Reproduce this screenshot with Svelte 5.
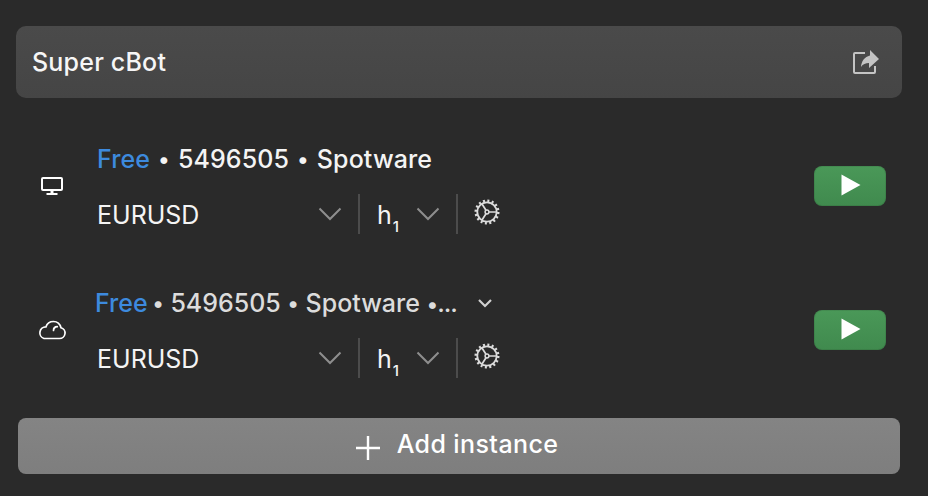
<script>
	const instances = [
		{ kind: "desktop", account: "Free", number: "5496505", broker: "Spotware", more: false },
		{ kind: "cloud", account: "Free", number: "5496505", broker: "Spotware", more: true }
	];
</script>

<div class="panel">
	<div class="header">
		<span class="name">Super cBot</span>
		<svg class="share" width="27" height="26" viewBox="0 0 27 26" fill="none">
			<path d="M13 4H3a1 1 0 0 0-1 1v18a1 1 0 0 0 1 1h19a1 1 0 0 0 1-1v-6" stroke="#c4c4c4" stroke-width="2" />
			<path d="M18 1l9 9-10 9v-5c-3.500 0-6 1-8 4 0.500-6 3.500-10 9-11.500z" fill="#c4c4c4" />
		</svg>
	</div>

	{#each instances as item}
		<div class="row">
			<div class="kind">
				{#if item.kind === "desktop"}
					<svg width="24" height="20" viewBox="0 0 24 20" fill="none" stroke="#fff">
						<rect x="2" y="2" width="20" height="12" rx="1" stroke-width="2" />
						<path d="M12 14v3" stroke-width="3" />
						<path d="M6.500 18h11" stroke-width="2" />
					</svg>
				{:else}
					<svg width="30" height="20" viewBox="0 0 30 20" fill="none" stroke="#fff" stroke-width="1.700">
						<path d="M7 18.500h15.500a5.500 5.500 0 0 0 1.500-10.800C23 3.800 20 1.500 16.500 1.500c-3.600 0-6.500 2-7.500 5.300A6 6 0 0 0 7 18.500z" />
						<path d="M16.500 10.500c0-2.200 1.600-3.800 3.800-3.800" stroke-linecap="round" />
					</svg>
				{/if}
			</div>

			<div class="body">
				<div class="title" class:more={item.more}>
					<span class="free">{item.account}</span>
					<span class="dot">•</span>
					<span>{item.number}</span>
					<span class="dot">•</span>
					<span>{item.broker}</span>
					{#if item.more}
						<span class="cut"><span class="dot">•</span>...</span>
						<svg class="caret" width="16" height="10" viewBox="0 0 16 10" fill="none">
							<path d="M2 2l6 6 6-6" stroke="#d0d0d0" stroke-width="2.200" />
						</svg>
					{/if}
				</div>
				<div class="controls">
					<div class="select symbol">
						<span>EURUSD</span>
						<svg width="24" height="14" viewBox="0 0 24 14" fill="none"><path d="M1.500 1.500 12 12 22.500 1.500" stroke="#8e8e8e" stroke-width="2" /></svg>
					</div>
					<div class="select frame">
						<span>h<sub>1</sub></span>
						<svg width="24" height="14" viewBox="0 0 24 14" fill="none"><path d="M1.500 1.500 12 12 22.500 1.500" stroke="#8e8e8e" stroke-width="2" /></svg>
					</div>
					<svg class="gear" width="26" height="26" viewBox="0 0 26 26" fill="none" stroke="#dcdcdc">
						<circle cx="13" cy="13" r="9.700" stroke-width="1.800" />
						<circle cx="13" cy="13" r="11.200" stroke-width="2.600" stroke-dasharray="2 2.400" />
						<circle cx="13" cy="13" r="1.900" stroke-width="1.500" />
						<path d="M15 13h8M12 11.300 8 5M12 14.700 8 21" stroke-width="1.700" />
					</svg>
				</div>
			</div>

			<button class="play" aria-label="Start">
				<svg width="20" height="22" viewBox="0 0 20 22"><path d="M0.500 0.500 19.500 11 0.500 21.500z" fill="#fff" /></svg>
			</button>
		</div>
	{/each}

	<button class="add">
		<svg width="26" height="26" viewBox="0 0 26 26"><path d="M13 1v24M1 13h24" stroke="#fff" stroke-width="2.400" /></svg>
		<span>Add instance</span>
	</button>
</div>

<style>
	:global(body) {
		background: #2a2a2a;
	}
	.panel {
		display: flex;
		flex-direction: column;
		width: 928px;
		height: 496px;
		box-sizing: border-box;
		padding: 26px 26px 22px 16px;
		font-family: Inter, "Liberation Sans", sans-serif;
		color: #fff;
	}
	.header {
		display: flex;
		align-items: center;
		justify-content: space-between;
		height: 72px;
		padding: 0 23px 0 16px;
		margin-bottom: 16px;
		border-radius: 10px;
		background: linear-gradient(#4a4a4a, #454545);
	}
	.name {
		font-size: 25px;
		font-weight: 450;
		letter-spacing: 0.2px;
		color: #f6f6f6;
	}
	.row {
		display: flex;
		align-items: center;
		height: 144px;
		padding: 0 16px;
	}
	.kind {
		display: flex;
		justify-content: center;
		width: 40px;
		margin-right: 25px;
	}
	.body {
		flex: 1;
	}
	.title {
		display: flex;
		align-items: center;
		gap: 8px;
		height: 48px;
		margin-bottom: 7px;
		font-size: 25px;
		font-weight: 450;
		letter-spacing: 0.1px;
		color: #f4f4f4;
		white-space: nowrap;
	}
	.title.more {
		gap: 6.5px;
		margin-left: -2px;
		letter-spacing: 0;
		color: #dcdcdc;
	}
	.free {
		color: #3d8ade;
	}
	.more .free {
		margin-right: -2px;
	}
	.dot {
		font-size: 22px;
	}
	.cut {
		letter-spacing: -1px;
	}
	.caret {
		margin-left: 14px;
	}
	.controls {
		display: flex;
		align-items: center;
		height: 48px;
		font-size: 25px;
		color: #f4f4f4;
	}
	.select {
		display: flex;
		align-items: center;
		justify-content: space-between;
		height: 40px;
		box-sizing: border-box;
		border-right: 2px solid #4c4c4c;
	}
	.select span {
		margin-top: 3px;
	}
	.symbol {
		width: 263px;
		padding-right: 16px;
	}
	.frame {
		width: 98px;
		padding: 0 16px 0 17px;
	}
	sub {
		font-size: 15px;
		font-weight: 500;
		line-height: 0;
		vertical-align: -8px;
		margin-left: 1px;
	}
	.gear {
		margin: -3px 0 0 16px;
	}
	.play {
		display: flex;
		align-items: center;
		justify-content: center;
		width: 72px;
		height: 40px;
		padding: 0 0 2px 2px;
		border: none;
		border-radius: 8px;
		background: linear-gradient(#4a9858, #408a4e);
		box-shadow: inset 0 0 0 1px rgba(0, 0, 0, 0.08);
	}
	.add {
		display: flex;
		align-items: center;
		justify-content: center;
		gap: 16px;
		width: 882px;
		height: 56px;
		margin: 16px 0 0 2px;
		padding: 0 5px 0 0;
		border: none;
		border-radius: 8px;
		background: linear-gradient(#848484, #7e7e7e);
		color: #fff;
		font-family: inherit;
		font-size: 25px;
		font-weight: 450;
		letter-spacing: 0.4px;
	}
	.add svg {
		margin-top: 4px;
	}
	.add span {
		margin-top: -4px;
	}
</style>
